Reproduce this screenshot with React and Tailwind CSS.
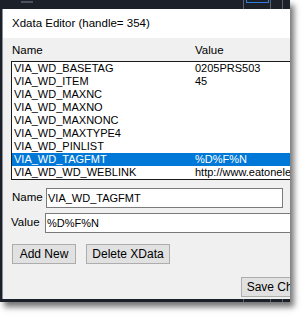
import React from 'react';

const rows = [
  { name: 'VIA_WD_BASETAG', value: '0205PRS503' },
  { name: 'VIA_WD_ITEM', value: '45' },
  { name: 'VIA_WD_MAXNC', value: '' },
  { name: 'VIA_WD_MAXNO', value: '' },
  { name: 'VIA_WD_MAXNONC', value: '' },
  { name: 'VIA_WD_MAXTYPE4', value: '' },
  { name: 'VIA_WD_PINLIST', value: '' },
  { name: 'VIA_WD_TAGFMT', value: '%D%F%N', selected: true },
  { name: 'VIA_WD_WD_WEBLINK', value: 'http://www.eatonele' },
];

function Button({ children, className = '' }) {
  return (
    <button
      className={`h-[20px] border border-[#adadad] bg-[#e1e1e1] text-[12px] leading-none text-black ${className}`}
    >
      {children}
    </button>
  );
}

export default function App() {
  return (
    <div className="w-[305px] h-[317px] bg-white overflow-hidden font-['Liberation_Sans',Arial,sans-serif]">
      <div className="w-[290px] h-[302px] bg-[#1c2129] overflow-hidden flex flex-col shadow-[4px_5px_6px_rgba(0,0,0,0.55)]">
        {/* desktop behind the dialog */}
        <div className="h-[9px] shrink-0 flex items-start">
          <div className="ml-[21px] mt-[1px] w-[12px] h-[2px] bg-[#4a5160]" />
          <div className="ml-[210px] w-px h-[9px] bg-[#5a6170]" />
          <div className="ml-[2px] w-[23px] h-[3px] border-b border-x border-[#2f7fe0]" />
          <div className="ml-[1px] w-px h-[9px] bg-[#5a6170]" />
          <div className="ml-[11px] w-px h-[9px] bg-[#5a6170]" />
        </div>

        {/* dialog */}
        <div className="flex-1 flex min-h-0">
          <div className="w-[3px] shrink-0 flex">
            <div className="w-[2px]" />
            <div className="w-px bg-[#8a8f96]" />
          </div>
          <div className="w-[340px] shrink-0 bg-[#f0f0f0] flex flex-col text-black">
            <div className="h-[29px] bg-white flex items-center pl-[9px] text-[11.5px]">
              Xdata Editor (handle= 354)
            </div>

            <div className="h-[23px] flex pt-[5px] text-[11.5px] leading-[14px]">
              <div className="w-[192px] pl-[9px]">Name</div>
              <div>Value</div>
            </div>

            <div className="ml-[8px] w-[320px] border border-[#1a1a1a] bg-white text-[11px] leading-[13px]">
              {rows.map((r) => (
                <div
                  key={r.name}
                  className={`h-[13px] flex whitespace-nowrap ${r.selected ? 'bg-[#0078d7] text-white' : ''}`}
                >
                  <div className="w-[183px] pl-[2px] shrink-0">{r.name}</div>
                  <div>{r.value}</div>
                </div>
              ))}
            </div>

            <div className="mt-[8px] ml-[9px] flex items-center">
              <div className="w-[34px] text-[11.5px]">Name</div>
              <div className="w-[237px] h-[20px] border border-[#7a7a7a] bg-white text-[11px] leading-[18px] pl-[1px]">
                VIA_WD_TAGFMT
              </div>
            </div>

            <div className="mt-[5px] ml-[8px] flex items-center">
              <div className="w-[34px] text-[11.5px]">Value</div>
              <div className="w-[290px] h-[20px] border border-[#7a7a7a] bg-white text-[11px] leading-[18px] pl-[1px]">
                %D%F%N
              </div>
            </div>

            <div className="mt-[11px] ml-[9px] flex gap-[10px]">
              <Button className="w-[64px]">Add New</Button>
              <Button className="w-[84px]">Delete XData</Button>
            </div>

            <div className="mt-[13px] pl-[238px] flex">
              <Button className="w-[90px]">Save Changes</Button>
            </div>
          </div>
        </div>

        <div className="h-[3px] shrink-0 flex">
          <div className="ml-[243px] w-px bg-[#5a6170]" />
          <div className="ml-[26px] w-px bg-[#5a6170]" />
          <div className="ml-[11px] w-px bg-[#5a6170]" />
        </div>
      </div>
    </div>
  );
}
